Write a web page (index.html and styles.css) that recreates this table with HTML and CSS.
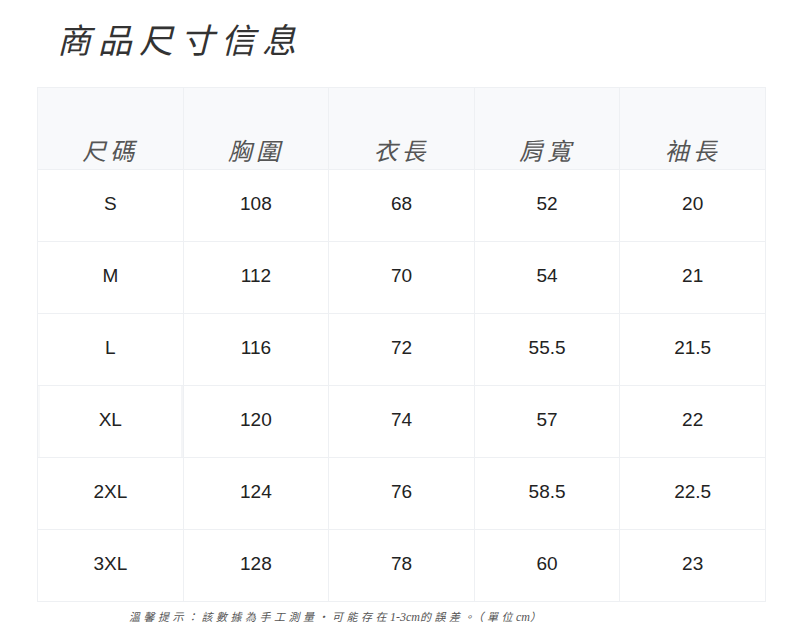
FILE: index.html
```html
<!DOCTYPE html>
<html lang="zh-Hant">
<head>
<meta charset="utf-8">
<title>商品尺寸信息</title>
<link rel="stylesheet" href="styles.css">
</head>
<body>
<div class="page">
  <header class="title-bar">
    <h1 class="title">商品尺寸信息</h1>
  </header>
  <table class="size-table">
    <thead>
      <tr><th>尺碼</th><th>胸圍</th><th>衣長</th><th>肩寬</th><th>袖長</th></tr>
    </thead>
    <tbody>
      <tr><td>S</td><td>108</td><td>68</td><td>52</td><td>20</td></tr>
      <tr><td>M</td><td>112</td><td>70</td><td>54</td><td>21</td></tr>
      <tr><td>L</td><td>116</td><td>72</td><td>55.5</td><td>21.5</td></tr>
      <tr><td class="xl">XL</td><td>120</td><td>74</td><td>57</td><td>22</td></tr>
      <tr><td>2XL</td><td>124</td><td>76</td><td>58.5</td><td>22.5</td></tr>
      <tr><td>3XL</td><td>128</td><td>78</td><td>60</td><td>23</td></tr>
    </tbody>
  </table>
  <p class="note">溫馨提示：該數據為手工測量・可能存在<span class="latin">1-3cm</span>的誤差。（單位<span class="latin">cm</span>）</p>
</div>
</body>
</html>
```
FILE: styles.css
```css
html, body {
  margin: 0;
  padding: 0;
  background: #ffffff;
}
body {
  font-family: "Noto Sans CJK TC", "Noto Sans CJK SC", sans-serif;
  width: 800px;
  height: 639px;
  overflow: hidden;
}
.page {
  display: flex;
  flex-direction: column;
}
.title-bar {
  height: 87px;
  display: flex;
  align-items: flex-start;
  padding-left: 57px;
}
.title {
  margin: 15px 0 0 0;
  font-size: 34px;
  line-height: 48px;
  font-weight: 400;
  font-style: italic;
  letter-spacing: 7px;
  color: #333333;
}
.size-table {
  margin-left: 37px;
  width: 729px;
  border-collapse: collapse;
  table-layout: fixed;
}
.size-table th,
.size-table td {
  border: 1px solid #eef0f3;
  text-align: center;
  padding: 0;
}
.size-table th {
  height: 79px;
  background: #f8f9fb;
  vertical-align: bottom;
  padding-bottom: 2px;
  font-family: "Noto Sans CJK TC", "Noto Sans CJK SC", sans-serif;
  font-size: 24px;
  line-height: 34px;
  font-weight: 400;
  font-style: italic;
  letter-spacing: 4px;
  color: #555555;
}
.size-table td {
  height: 68px;
  padding-bottom: 3px;
  font-family: "Liberation Sans", Arial, sans-serif;
  font-size: 19px;
  color: #222222;
}
.size-table td.xl {
  box-shadow: inset -2px 0 0 #f4f5f7, inset 2px 0 0 #f8f9fa;
}
.note {
  margin: 6px 0 0 129px;
  font-size: 11px;
  line-height: 16px;
  font-style: italic;
  letter-spacing: 3.5px;
  color: #555555;
}
.note .latin {
  letter-spacing: 0;
  font-family: "Liberation Serif", serif;
  font-size: 12px;
}
```
